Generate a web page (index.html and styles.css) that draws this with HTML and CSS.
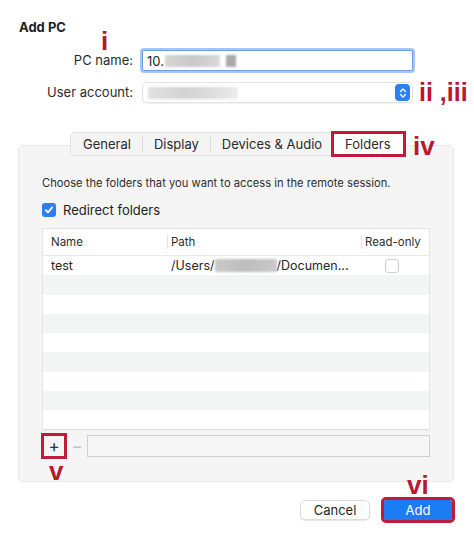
FILE: index.html
```html
<!DOCTYPE html>
<html lang="en">
<head>
    <meta charset="UTF-8">
    <meta name="viewport" content="width=device-width, initial-scale=1.0">
    <title>Add PC</title>
    <link rel="stylesheet" href="styles.css">
</head>
<body>
    <div class="dialog">
        <h1 class="dialog-title">Add PC</h1>

        <div class="form-grid">
            <label class="form-label" for="pcname">PC name:</label>
            <div class="text-field focused" id="pcname">
                <span>10.</span>
                <span class="blur blur-a"></span>
                <span class="blur blur-b"></span>
            </div>
            <label class="form-label">User account:</label>
            <div class="popup">
                <span class="blur blur-c"></span>
                <span class="stepper">
                    <svg width="8" height="12" viewBox="0 0 8 12"><path d="M1.5 4.5 L4 2 L6.5 4.5 M1.5 7.5 L4 10 L6.5 7.5" fill="none" stroke="#fff" stroke-width="1.4" stroke-linecap="round" stroke-linejoin="round"/></svg>
                </span>
            </div>
        </div>

        <div class="group-box">
            <div class="tabs">
                <span class="tab">General</span>
                <span class="tab-sep"></span>
                <span class="tab">Display</span>
                <span class="tab-sep"></span>
                <span class="tab">Devices &amp; Audio</span>
                <span class="tab active marked">Folders</span>
            </div>

            <p class="hint">Choose the folders that you want to access in the remote session.</p>

            <label class="check-row">
                <span class="checkbox on">
                    <svg width="10" height="10" viewBox="0 0 10 10"><path d="M1.8 5.2 L4 7.4 L8.2 2.4" fill="none" stroke="#fff" stroke-width="1.8" stroke-linecap="round" stroke-linejoin="round"/></svg>
                </span>
                Redirect folders
            </label>

            <div class="table">
                <div class="table-head">
                    <span class="col-name">Name</span>
                    <span class="col-path">Path</span>
                    <span class="col-ro">Read-only</span>
                </div>
                <div class="table-row">
                    <span class="col-name">test</span>
                    <span class="col-path">/Users/<span class="blur blur-d"></span>/Documen...</span>
                    <span class="col-ro"><span class="checkbox off"></span></span>
                </div>
                <div class="table-row"></div>
                <div class="table-row"></div>
                <div class="table-row"></div>
                <div class="table-row"></div>
                <div class="table-row"></div>
                <div class="table-row"></div>
                <div class="table-row"></div>
                <div class="table-row"></div>
            </div>

            <div class="list-bar">
                <span class="bar-btn marked">+</span>
                <span class="bar-btn dim">&minus;</span>
                <span class="bar-field"></span>
            </div>
        </div>

        <div class="actions">
            <button class="btn">Cancel</button>
            <button class="btn primary">Add</button>
        </div>
    </div>

    <span class="note note-i">i</span>
    <span class="note note-ii">ii ,iii</span>
    <span class="note note-iv">iv</span>
    <span class="note note-v">v</span>
    <span class="note note-vi">vi</span>
</body>
</html>
```

FILE: styles.css
```css
body {
    margin: 0;
    width: 474px;
    height: 537px;
    overflow: hidden;
    background: #fff;
    font-family: Inter, "Noto Sans", sans-serif;
    color: #262626;
    position: relative;
}
.dialog {
    padding: 19px 0 0 0;
}
.dialog-title {
    margin: 0 0 0 19px;
    font-size: 13px;
    font-weight: 700;
    line-height: 16px;
    color: #1f1f1f;
}
.form-grid {
    display: grid;
    grid-template-columns: 133px 271px;
    column-gap: 9px;
    row-gap: 11px;
    margin-top: 15px;
}
.form-label {
    align-self: center;
    text-align: right;
    font-size: 13px;
    line-height: 15px;
    color: #2a2a2a;
}
.text-field {
    height: 21px;
    box-sizing: border-box;
    display: flex;
    align-items: center;
    padding-left: 4px;
    font-size: 13px;
    background: #fff;
    border: 1px solid #c9c9c9;
}
.text-field.focused {
    border: 1px solid #6d9de8;
    box-shadow: 0 0 0 2px #a8c6f3;
    border-radius: 2px;
}
.blur {
    display: inline-block;
    background: #c4c4c4;
    filter: blur(1px);
}
.blur-a {
    width: 55px;
    height: 12px;
    margin-left: 1px;
    background: linear-gradient(90deg, #d6d6d6, #c7c7c7 50%, #dadada);
}
.blur-b {
    width: 10px;
    height: 12px;
    margin-left: 6px;
    background: #a9a9a9;
}
.popup {
    height: 21px;
    box-sizing: border-box;
    display: flex;
    align-items: center;
    justify-content: space-between;
    padding: 0 2px 0 5px;
    border: 1px solid #e2e2e2;
    border-radius: 5px;
    background: #fff;
    box-shadow: 0 1px 1px rgba(0, 0, 0, 0.06);
}
.blur-c {
    width: 90px;
    height: 12px;
    background: linear-gradient(90deg, #e2e2e2, #d2d2d2 40%, #dcdcdc 70%, #ececec);
}
.stepper {
    width: 15px;
    height: 17px;
    border-radius: 4px;
    background: #2d7ff4;
    display: flex;
    align-items: center;
    justify-content: center;
}
.group-box {
    margin: 42px 20px 0 18px;
    height: 337px;
    box-sizing: border-box;
    background: #f5f5f5;
    border: 1px solid #e8e8e8;
    border-radius: 5px;
    padding: 0 23px 0 23px;
}
.tabs {
    display: flex;
    align-items: center;
    width: max-content;
    margin: -14px 0 0 28px;
    height: 22px;
    background: #f4f4f4;
    border: 1px solid #e1e1e1;
    border-radius: 5px;
    padding-left: 1px;
}
.tab {
    font-size: 13px;
    color: #2a2a2a;
    padding: 0 11px;
    line-height: 22px;
}
.tab-sep {
    width: 1px;
    height: 14px;
    background: #d8d8d8;
}
.tab.active {
    background: #fff;
    padding: 0 13px 0 12px;
}
.marked {
    outline: 3px solid #bf1b3a;
    outline-offset: -1px;
}
.tab.marked {
    height: 22px;
    line-height: 22px;
}
.hint {
    margin: 20px 0 0 0;
    font-size: 11.2px;
    line-height: 14px;
    color: #2e2e2e;
}
.check-row {
    display: flex;
    align-items: center;
    gap: 7px;
    margin-top: 12px;
    font-size: 13px;
    line-height: 16px;
    color: #222;
}
.checkbox {
    width: 14px;
    height: 14px;
    box-sizing: border-box;
    border-radius: 3px;
    display: inline-flex;
    align-items: center;
    justify-content: center;
}
.checkbox.on {
    background: #2f7cf6;
}
.checkbox.off {
    background: #fff;
    border: 1px solid #cfcfcf;
}
.table {
    margin-top: 10px;
    background: #fff;
    border: 1px solid #e4e4e4;
    border-bottom-color: #dcdcdc;
}
.table-head,
.table-row {
    display: grid;
    grid-template-columns: 124px 194px 1fr;
    align-items: center;
    font-size: 12.5px;
}
.table-head {
    height: 26px;
    border-bottom: 1px solid #eaeaea;
    color: #2e2e2e;
    font-size: 11.5px;
}
.table-head span + span {
    border-left: 1px solid #e3e3e3;
    line-height: 14px;
    padding-left: 3px;
}
.table-head .col-name {
    padding-left: 8px;
}
.table-row {
    height: 19.25px;
}
.table-row:nth-child(odd) {
    background: #f3f4f4;
}
.table-row .col-name {
    padding-left: 8px;
}
.table-row .col-path {
    padding-left: 4px;
    display: flex;
    align-items: center;
    white-space: nowrap;
}
.table-row .col-ro {
    display: flex;
    padding-left: 24px;
}
.blur-d {
    width: 62px;
    height: 13px;
    background: linear-gradient(90deg, #c9c9c9, #bdbdbd 50%, #c9c9c9);
}
.list-bar {
    display: flex;
    align-items: center;
    margin-top: 5px;
    height: 22px;
}
.bar-btn {
    width: 24px;
    height: 22px;
    display: flex;
    align-items: center;
    justify-content: center;
    font-size: 17px;
    color: #333;
}
.bar-btn.marked {
    width: 22px;
    margin: 0 2px 0 1px;
}
.bar-btn.dim {
    color: #c4c4c4;
    width: 20px;
}
.bar-field {
    flex: 1;
    height: 22px;
    box-sizing: border-box;
    border: 1px solid #cfcfcf;
    background: #f6f6f6;
}
.actions {
    display: flex;
    justify-content: flex-end;
    gap: 14px;
    margin: 18px 22px 0 0;
}
.btn {
    font-family: Inter, "Noto Sans", sans-serif;
    font-size: 13px;
    width: 70px;
    height: 20px;
    padding: 0;
    border: 1px solid #dcdcdc;
    border-radius: 5px;
    background: #fff;
    color: #262626;
    box-shadow: 0 1px 1px rgba(0, 0, 0, 0.1);
}
.btn.primary {
    width: 68px;
    background: #1c7cf4;
    border-color: #1c7cf4;
    color: #fff;
    border-radius: 2px;
    outline: 3px solid #bf1b3a;
    outline-offset: 0;
}
.note {
    position: absolute;
    font-family: "Liberation Sans", Arial, sans-serif;
    font-weight: 700;
    font-size: 26px;
    line-height: 16px;
    color: #b8182f;
}
.note-i {
    left: 101px;
    top: 33px;
}
.note-ii {
    left: 419px;
    top: 84px;
    font-size: 25px;
}
.note-iv {
    left: 413px;
    top: 138px;
}
.note-v {
    left: 49px;
    top: 463px;
}
.note-vi {
    left: 407px;
    top: 477px;
}
```
